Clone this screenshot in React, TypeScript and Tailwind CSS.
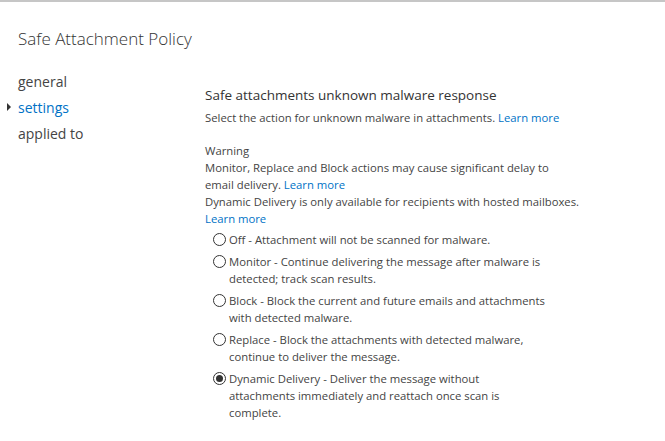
// Safe Attachment Policy - settings page

const font = { fontFamily: '"Open Sans", "Noto Sans", Arial, sans-serif' };

type Option = { lines: string[]; checked?: boolean };

const options: Option[] = [
  { lines: ['Off - Attachment will not be scanned for malware.'] },
  { lines: ['Monitor - Continue delivering the message after malware is', 'detected; track scan results.'] },
  { lines: ['Block - Block the current and future emails and attachments', 'with detected malware.'] },
  { lines: ['Replace - Block the attachments with detected malware,', 'continue to deliver the message.'] },
  {
    lines: ['Dynamic Delivery - Deliver the message without', 'attachments immediately and reattach once scan is', 'complete.'],
    checked: true,
  },
];

function Radio({ checked }: { checked?: boolean }) {
  return (
    <span className="mt-[2px] flex h-[13px] w-[13px] shrink-0 items-center justify-center rounded-full border border-[#333]">
      {checked && <span className="h-[7px] w-[7px] rounded-full bg-[#333]" />}
    </span>
  );
}

export default function App() {
  return (
    <div className="h-[441px] w-[665px] overflow-hidden border-t-2 border-[#c6c6c6] bg-white text-[#444]" style={font}>
      <h1 className="pl-[18px] pt-[24px] text-[17px] font-light text-[#333]">Safe Attachment Policy</h1>

      <div className="mt-[19px] flex">
        {/* left nav */}
        <nav className="flex w-[205px] shrink-0 flex-col gap-[5px] text-[14px]">
          <span className="pl-[18px]">general</span>
          <span className="relative pl-[18px] text-[#0072c6]">
            <span className="absolute left-[7px] top-[6px] h-0 w-0 border-y-[4px] border-l-[4px] border-y-transparent border-l-[#333]" />
            settings
          </span>
          <span className="pl-[18px]">applied to</span>
        </nav>

        {/* content */}
        <div className="pt-[16px] text-[11.3px] leading-[17px]">
          <h2 className="text-[13.5px] text-[#333]">Safe attachments unknown malware response</h2>
          <p className="mt-[5px]">
            Select the action for unknown malware in attachments. <a className="text-[#0072c6]">Learn more</a>
          </p>
          <div className="mt-[16px]">
            <div>Warning</div>
            <div>Monitor, Replace and Block actions may cause significant delay to</div>
            <div>
              email delivery. <a className="text-[#0072c6]">Learn more</a>
            </div>
            <div>Dynamic Delivery is only available for recipients with hosted mailboxes.</div>
            <div>
              <a className="text-[#0072c6]">Learn more</a>
            </div>
          </div>

          <div className="mt-[4px] flex flex-col gap-[5px] pl-[8px]">
            {options.map((o, i) => (
              <label key={i} className="flex gap-[3px]">
                <Radio checked={o.checked} />
                <span>
                  {o.lines.map((l, j) => (
                    <div key={j}>{l}</div>
                  ))}
                </span>
              </label>
            ))}
          </div>
        </div>
      </div>
    </div>
  );
}
